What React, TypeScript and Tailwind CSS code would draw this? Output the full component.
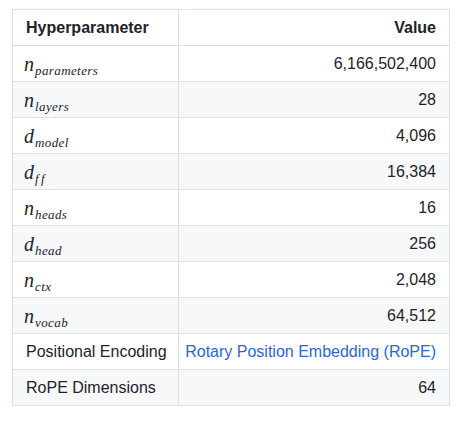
import React from "react";

type Row = { sym?: [string, string]; label?: string; value: string; link?: boolean };

const rows: Row[] = [
  { sym: ["n", "parameters"], value: "6,166,502,400" },
  { sym: ["n", "layers"], value: "28" },
  { sym: ["d", "model"], value: "4,096" },
  { sym: ["d", "ff"], value: "16,384" },
  { sym: ["n", "heads"], value: "16" },
  { sym: ["d", "head"], value: "256" },
  { sym: ["n", "ctx"], value: "2,048" },
  { sym: ["n", "vocab"], value: "64,512" },
  { label: "Positional Encoding", value: "Rotary Position Embedding (RoPE)", link: true },
  { label: "RoPE Dimensions", value: "64" },
];

function Sym({ base, sub }: { base: string; sub: string }) {
  return (
    <span
      className="italic text-[#1f2328] [font-variant-ligatures:none] -ml-[2px]"
      style={{ fontFamily: '"Liberation Serif", serif' }}
    >
      <span className="text-[20px]">{base}</span>
      <span className="text-[13px] relative top-[4px] ml-[1px] tracking-[0.4px]">
        {sub === "ff" ? (
          <>
            <span className="inline-block mr-[2px]">f</span>
            <span className="inline-block">f</span>
          </>
        ) : (
          sub
        )}
      </span>
    </span>
  );
}

export default function App() {
  return (
    <div
      className="w-[474px] h-[421px] bg-white pt-[9px] pl-[12px] antialiased"
      style={{ fontFamily: '"Liberation Sans", Arial, sans-serif' }}
    >
      <div className="w-[438px] border-t border-l border-[#dde1e6] text-[16px] text-[#1f2328]">
        <div className="flex h-[36px] border-b border-[#dde1e6] bg-white">
          <div className="w-[166px] border-r border-[#dde1e6] flex items-center pl-[13px] font-bold">Hyperparameter</div>
          <div className="flex-1 border-r border-[#dde1e6] flex items-center justify-end pr-[13px] font-bold">Value</div>
        </div>
        {rows.map((r, i) => (
          <div
            key={i}
            className={`flex h-[36px] border-b border-[#dde1e6] ${i % 2 === 1 ? "bg-[#f6f8fa]" : "bg-white"}`}
          >
            <div className="w-[166px] border-r border-[#dde1e6] flex items-center pl-[13px]">
              {r.sym ? <Sym base={r.sym[0]} sub={r.sym[1]} /> : r.label}
            </div>
            <div
              className={`flex-1 border-r border-[#dde1e6] flex items-center justify-end pr-[13px] ${
                r.link ? "text-[#2a67d3]" : ""
              }`}
            >
              {r.value}
            </div>
          </div>
        ))}
      </div>
    </div>
  );
}
